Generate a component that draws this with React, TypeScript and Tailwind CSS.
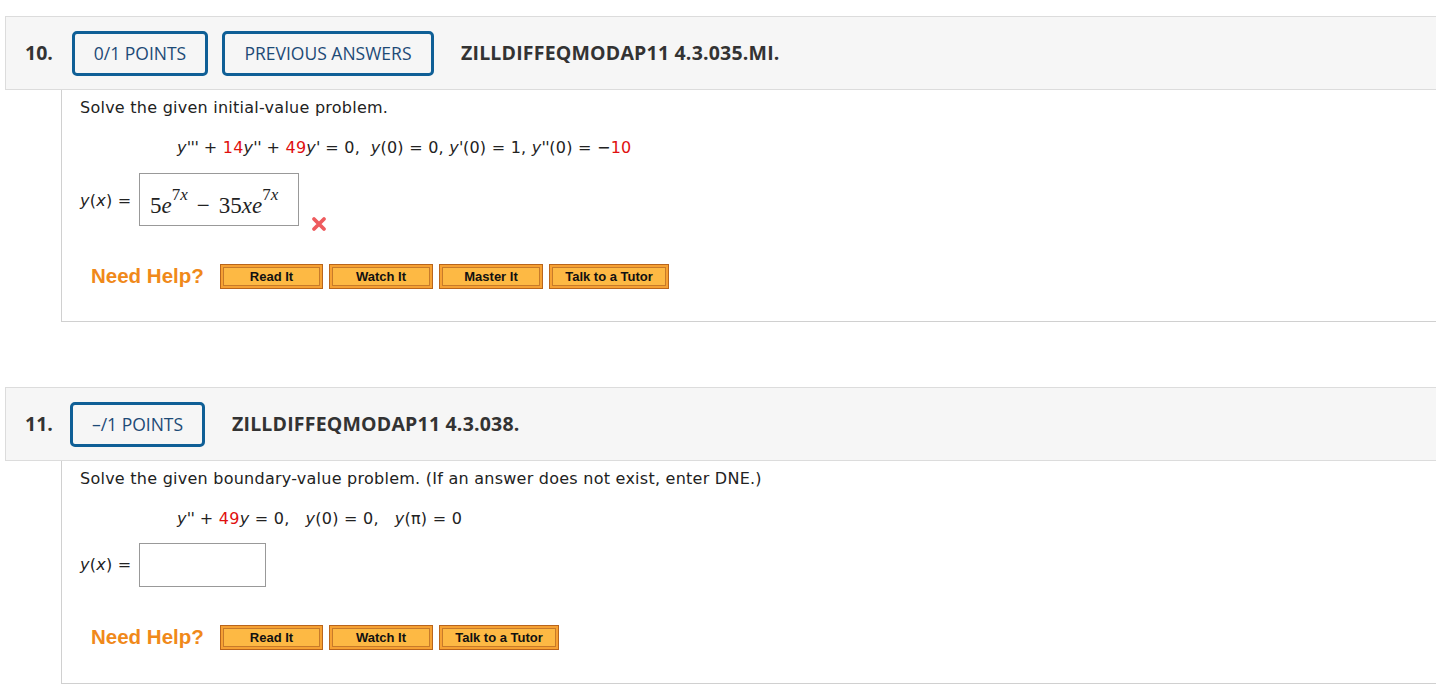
import React from "react";

function Badge({ children, className = "" }: { children: React.ReactNode; className?: string }) {
  return (
    <div
      className={`h-[45px] flex items-center justify-center border-[3px] border-[#0f5f96] rounded-[5px] text-[17.5px] text-[#1d4a76] ${className}`}
    >
      {children}
    </div>
  );
}

function Header({
  num,
  numW,
  badges,
  title,
}: {
  num: string;
  numW: string;
  badges: { label: string; w: string }[];
  title: string;
}) {
  return (
    <div className="ml-[5px] h-[74px] flex items-center border-l border-t border-b border-[#dcdcdc] bg-[#f6f6f6] font-['Open_Sans',sans-serif] tracking-normal">
      <div className={`${numW} pl-[19px] text-[19.5px] font-bold text-[#333]`}>{num}</div>
      <div className="flex gap-[14px]">
        {badges.map((b) => (
          <Badge key={b.label} className={b.w}>
            {b.label}
          </Badge>
        ))}
      </div>
      <div className="ml-[27px] text-[19.5px] font-bold text-[#333] tracking-[0.2px]">{title}</div>
    </div>
  );
}

function HelpButton({ label, w }: { label: string; w: string }) {
  return (
    <div className={`h-[25px] ${w} border border-[#b9651c] bg-[#f6a133] p-[2px]`}>
      <div className="h-full border border-[#c77a2a] bg-[#fdb944] flex items-center justify-center text-[13px] font-bold text-[#111] tracking-normal font-['Liberation_Sans',Arial,sans-serif]">
        {label}
      </div>
    </div>
  );
}

function NeedHelp({ buttons }: { buttons: { label: string; w: string }[] }) {
  return (
    <div className="flex items-center pl-[11px]">
      <span className="w-[129px] text-[20.5px] font-bold tracking-normal text-[#f0891a] font-['Liberation_Sans',Arial,sans-serif]">
        Need Help?
      </span>
      <div className="flex gap-[6px]">
        {buttons.map((b) => (
          <HelpButton key={b.label} {...b} />
        ))}
      </div>
    </div>
  );
}

const R = ({ children }: { children: React.ReactNode }) => <span className="text-[#e0100f]">{children}</span>;
const I = ({ children }: { children: React.ReactNode }) => <i>{children}</i>;
// prime marks drawn as slanted apostrophes, like the source page
const P = ({ n }: { n: number }) => <i className="tracking-[-0.5px]">{"'".repeat(n)}</i>;

function Sup() {
  return (
    <span className="relative -top-[11px] text-[17px]">
      7<i>x</i>
    </span>
  );
}

export default function App() {
  return (
    <div className="w-[1436px] min-h-[693px] bg-white pt-[16px] overflow-hidden font-['DejaVu_Sans',Verdana,sans-serif]">
      {/* question 10 */}
      <Header
        num="10."
        numW="w-[66px]"
        badges={[
          { label: "0/1 POINTS", w: "w-[136px]" },
          { label: "PREVIOUS ANSWERS", w: "w-[212px]" },
        ]}
        title="ZILLDIFFEQMODAP11 4.3.035.MI."
      />
      <div className="ml-[61px] h-[232px] border-l border-b border-[#d0d0d0] pl-[18px] pt-[8px] text-[16px] tracking-[0.25px] text-[#222]">
        <div className="h-[20px] leading-[20px]">Solve the given initial-value problem.</div>
        <div className="mt-[20px] ml-[97px] h-[20px] leading-[20px] whitespace-pre">
          <I>y</I><P n={3} /> + <R>14</R><I>y</I><P n={2} /> + <R>49</R><I>y</I><P n={1} /> = 0,  <I>y</I>(0) = 0, <I>y</I><P n={1} />(0) = 1, <I>y</I><P n={2} />(0) = −<R>10</R>
        </div>
        <div className="mt-[15px] flex items-start">
          <div className="mt-[18px] w-[59px] leading-[20px]">
            <I>y</I>(<I>x</I>) =
          </div>
          <div className="w-[160px] h-[53px] border border-[#999] flex items-center pl-[10px] pt-[12px] text-[23px] leading-none tracking-normal text-[#222] whitespace-nowrap font-['Liberation_Serif','Times_New_Roman',serif]">
            5<i>e</i>
            <Sup />
            <span className="mx-[9px]">−</span>35<i>xe</i>
            <Sup />
          </div>
          <div className="ml-[12px] mt-[43px]">
            <svg width="16" height="16" viewBox="0 0 16 16">
              <path d="M3 3 L13 13 M13 3 L3 13" stroke="#ee5b5e" strokeWidth="3.8" strokeLinecap="round" />
            </svg>
          </div>
        </div>
        <div className="mt-[29px]">
          <NeedHelp
            buttons={[
              { label: "Read It", w: "w-[103px]" },
              { label: "Watch It", w: "w-[104px]" },
              { label: "Master It", w: "w-[104px]" },
              { label: "Talk to a Tutor", w: "w-[120px]" },
            ]}
          />
        </div>
      </div>

      {/* question 11 */}
      <div className="mt-[65px]">
        <Header num="11." numW="w-[64px]" badges={[{ label: "–/1 POINTS", w: "w-[135px]" }]} title="ZILLDIFFEQMODAP11 4.3.038." />
      </div>
      <div className="ml-[61px] h-[223px] border-l border-b border-[#d0d0d0] pl-[18px] pt-[8px] text-[16px] tracking-[0.25px] text-[#222]">
        <div className="h-[20px] leading-[20px]">
          Solve the given boundary-value problem. (If an answer does not exist, enter DNE.)
        </div>
        <div className="mt-[20px] ml-[97px] h-[20px] leading-[20px] whitespace-pre">
          <I>y</I><P n={2} /> + <R>49</R><I>y</I> = 0,   <I>y</I>(0) = 0,   <I>y</I>(π) = 0
        </div>
        <div className="mt-[14px] flex items-center">
          <div className="w-[59px] leading-[20px]">
            <I>y</I>(<I>x</I>) =
          </div>
          <div className="w-[127px] h-[44px] border border-[#999]" />
        </div>
        <div className="mt-[35px]">
          <NeedHelp
            buttons={[
              { label: "Read It", w: "w-[103px]" },
              { label: "Watch It", w: "w-[104px]" },
              { label: "Talk to a Tutor", w: "w-[120px]" },
            ]}
          />
        </div>
      </div>
    </div>
  );
}
